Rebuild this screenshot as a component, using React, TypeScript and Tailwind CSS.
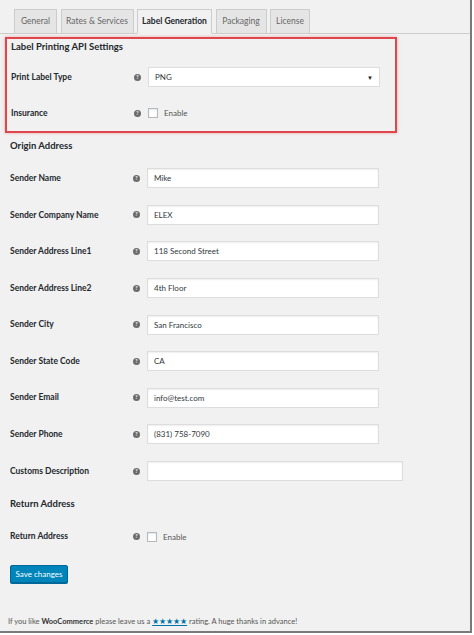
const font = { fontFamily: 'Lato, "Liberation Sans", sans-serif' };

const tabs = [
  { name: "General", w: "w-[43px]" },
  { name: "Rates & Services", w: "w-[73px]" },
  { name: "Label Generation", w: "w-[75px]", active: true },
  { name: "Packaging", w: "w-[51px]" },
  { name: "License", w: "w-[40px]" },
];

const origin = [
  { label: "Sender Name", value: "Mike" },
  { label: "Sender Company Name", value: "ELEX" },
  { label: "Sender Address Line1", value: "118 Second Street" },
  { label: "Sender Address Line2", value: "4th Floor" },
  { label: "Sender City", value: "San Francisco" },
  { label: "Sender State Code", value: "CA" },
  { label: "Sender Email", value: "info@test.com" },
  { label: "Sender Phone", value: "(831) 758-7090" },
  { label: "Customs Description", value: "", wide: true },
];

function Help() {
  return (
    <span className="flex h-[7px] w-[7px] items-center justify-center rounded-full bg-[#6b6b6b] text-[5px] font-bold leading-none text-white">
      ?
    </span>
  );
}

function Row({ label, h = "h-[36.6px]", children }: { label: string; h?: string; children: React.ReactNode }) {
  return (
    <div className={`flex items-center ${h}`}>
      <div className="w-[123px] text-[8.5px] font-bold text-[#23282d]">{label}</div>
      <div className="flex w-[14px] items-center">
        <Help />
      </div>
      {children}
    </div>
  );
}

function TextBox({ value, wide }: { value: string; wide?: boolean }) {
  return (
    <div
      className={`flex h-[20px] items-center border border-[#dddddd] bg-white px-[6px] text-[8px] text-[#32373c] shadow-[inset_0_1px_2px_rgba(0,0,0,0.07)] ${
        wide ? "w-[256px]" : "w-[232px]"
      }`}
    >
      {value}
    </div>
  );
}

function Check() {
  return (
    <div className="flex items-center gap-[6px]">
      <span className="h-[10px] w-[10px] border border-[#b4b9be] bg-white shadow-[inset_0_1px_2px_rgba(0,0,0,0.1)]"></span>
      <span className="text-[8px] text-[#555]">Enable</span>
    </div>
  );
}

export default function App() {
  return (
    <div className="h-[635px] w-[474px] bg-white" style={font}>
      <div className="h-[633px] w-[472px] border-b-2 border-r-2 border-[#7a7a7a] bg-[#f1f1f1]">
        {/* Tabs */}
        <div className="flex gap-[3.5px] border-b border-[#cccccc] pl-[14px] pt-[9px]">
          {tabs.map((t) => (
            <div
              key={t.name}
              className={`-mb-px flex h-[25px] items-center justify-center whitespace-nowrap border border-[#cccccc] text-[8.5px] ${t.w} ${
                t.active ? "border-b-[#f1f1f1] bg-[#f1f1f1] font-bold text-[#23282d]" : "bg-[#e5e5e5] text-[#666]"
              }`}
            >
              {t.name}
            </div>
          ))}
        </div>

        <div className="pl-[10px]">
          {/* Label printing settings (highlighted) */}
          <div className="ml-[-5px] mt-[3px] w-[392px] border-2 border-[#e0474c] pl-[4px] shadow-[0_0_3px_rgba(224,71,76,0.4)]">
            <div className="flex h-[16px] items-center text-[9.5px] font-bold text-[#23282d]">
              Label Printing API Settings
            </div>
            <div className="mt-[4px]">
              <Row label="Print Label Type" h="h-[36px]">
                <div className="flex h-[20px] w-[232px] items-center justify-between border border-[#dddddd] bg-white px-[6px] text-[8px] text-[#32373c]">
                  <span>PNG</span>
                  <span className="text-[6px] text-[#222]">▼</span>
                </div>
              </Row>
              <Row label="Insurance" h="h-[36px]">
                <Check />
              </Row>
            </div>
          </div>

          {/* Origin address */}
          <div className="flex h-[27px] items-center text-[9.5px] font-bold text-[#23282d]">Origin Address</div>
          {origin.map((r) => (
            <Row key={r.label} label={r.label}>
              <TextBox value={r.value} wide={r.wide} />
            </Row>
          ))}

          {/* Return address */}
          <div className="flex h-[29px] items-center text-[9.5px] font-bold text-[#23282d]">Return Address</div>
          <Row label="Return Address">
            <Check />
          </Row>

          <button className="mt-[10px] flex h-[18px] w-[58px] items-center justify-center rounded-[2px] border border-[#006799] bg-[#0085ba] text-[8px] text-white shadow-[0_1px_0_#006799]">
            Save changes
          </button>
        </div>

        <div className="mt-[33px] pl-[8px] text-[7.5px] leading-[12px] text-[#555]">
          If you like <span className="font-bold text-[#333]">WooCommerce</span> please leave us a{" "}
          <span className="text-[#0073aa] underline">★★★★★</span> rating. A huge thanks in advance!
        </div>
      </div>
    </div>
  );
}
